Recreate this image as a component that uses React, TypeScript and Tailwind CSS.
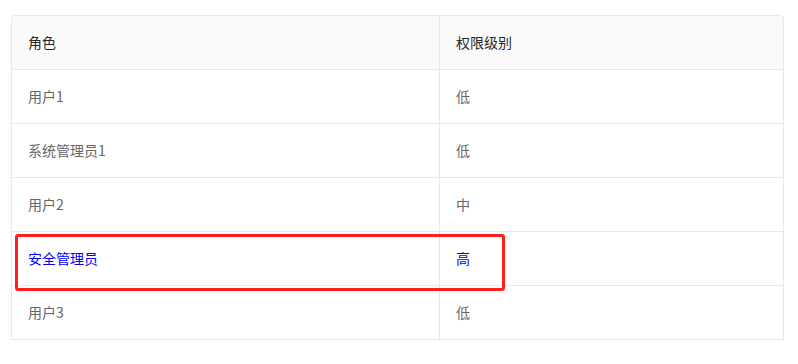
const rows = [
  { role: "用户1", level: "低" },
  { role: "系统管理员1", level: "低" },
  { role: "用户2", level: "中" },
  { role: "安全管理员", level: "高", active: true },
  { role: "用户3", level: "低" },
]

export default function App() {
  return (
    <div
      className="relative h-[364px] w-[798px] bg-white pl-[11px] pt-[15px] text-[14px]"
      style={{ fontFamily: '"Noto Sans CJK SC", "Noto Sans", sans-serif' }}
    >
      <div className="w-[773px] overflow-hidden rounded-t-[4px] border border-[#e8e8e8]">
        <div className="grid h-[54px] grid-cols-[428px_1fr] border-b border-[#e8e8e8] bg-[#fafafa] text-[#262626]">
          <div className="flex items-center border-r border-[#e8e8e8] pl-[16px]">角色</div>
          <div className="flex items-center pl-[16px]">权限级别</div>
        </div>
        {rows.map((row, i) => {
          const last = i === rows.length - 1
          const color = row.active ? "text-[#0000ff]" : "text-[#666666]"
          return (
            <div
              key={row.role}
              className={last ? "grid h-[53px] grid-cols-[428px_1fr]" : "grid h-[54px] grid-cols-[428px_1fr] border-b border-[#e8e8e8]"}
            >
              <div className={`flex items-center border-r border-[#e8e8e8] pl-[16px] ${color}`}>{row.role}</div>
              <div className={`flex items-center pl-[16px] ${color}`}>{row.level}</div>
            </div>
          )
        })}
      </div>
      {/* highlight frame around the selected row */}
      <div className="pointer-events-none absolute left-[15px] top-[234px] h-[57px] w-[490px] rounded-[3px] border-[3px] border-[#ff1f1f]" />
    </div>
  )
}
